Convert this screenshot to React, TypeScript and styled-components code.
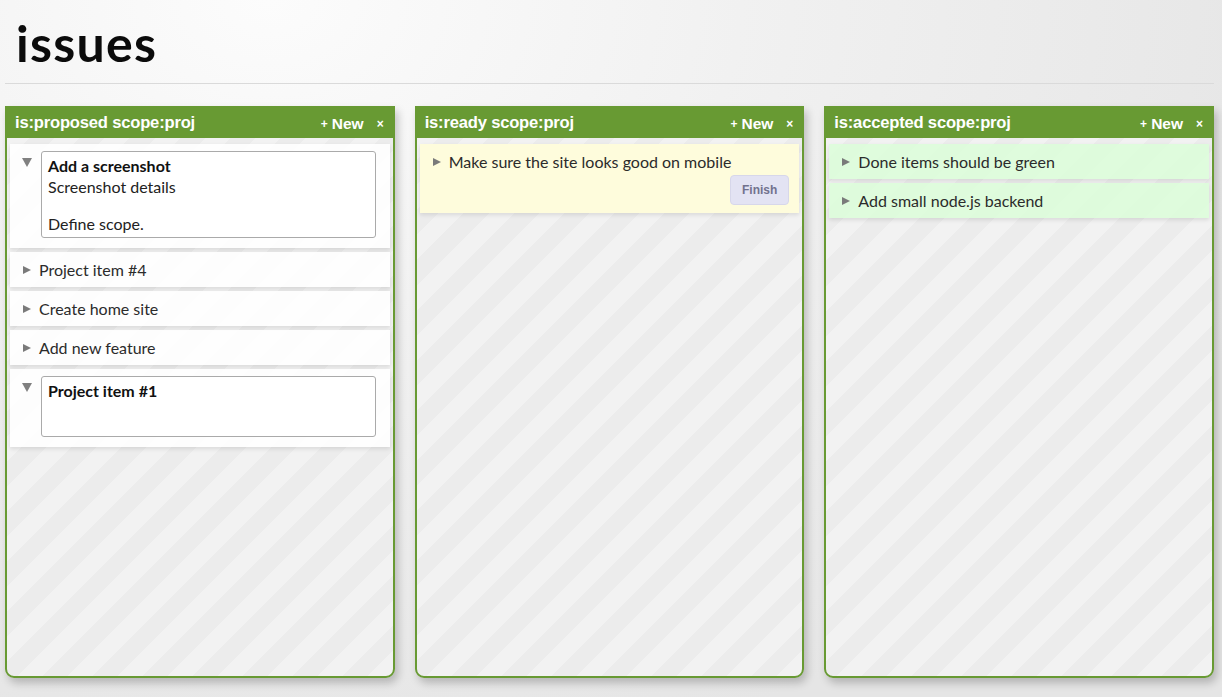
import React from "react";
import styled, { createGlobalStyle } from "styled-components";

const GlobalStyle = createGlobalStyle`
  html, body {
    margin: 0;
    padding: 0;
    height: 100%;
  }
  body {
    font-family: Lato, "Open Sans", sans-serif;
    background: radial-gradient(ellipse at 22% 0%, #fcfcfc 0%, #f1f1f1 35%, #e5e5e5 80%);
    overflow: hidden;
  }
  #root {
    height: 100%;
  }
`;

const Page = styled.div`
  height: 100vh;
  display: flex;
  flex-direction: column;
  box-sizing: border-box;
  padding: 0 8px 19px 5px;
`;

const Header = styled.header`
  height: 84px;
  box-sizing: border-box;
  border-bottom: 1px solid #dadada;
  display: flex;
  align-items: flex-end;
  padding: 0 0 15px 11px;
  margin-bottom: 22px;
`;

const Title = styled.h1`
  margin: 0;
  font-family: Lato, sans-serif;
  font-weight: 700;
  font-size: 50px;
  line-height: 1;
  color: #0b0b0b;
  letter-spacing: 1.3px;
`;

const Board = styled.div`
  flex: 1;
  display: flex;
  gap: 20px;
  min-height: 0;
`;

const Column = styled.section`
  flex: 1;
  display: flex;
  flex-direction: column;
  border: 2px solid #689a33;
  border-radius: 0 0 9px 9px;
  background: repeating-linear-gradient(
    -45deg,
    #f2f2f2 0px,
    #f2f2f2 17.7px,
    #ececec 17.7px,
    #ececec 35.4px
  );
  box-shadow: 3px 5px 9px rgba(0, 0, 0, 0.22);
  overflow: hidden;
`;

const ColumnHead = styled.div`
  height: 30px;
  background: #689a33;
  display: flex;
  align-items: center;
  padding: 0 9px 0 8px;
  color: #fff;
  font-family: "Liberation Sans", Arial, sans-serif;
  font-weight: 700;
`;

const ColumnTitle = styled.span`
  flex: 1;
  font-size: 16.6px;
  letter-spacing: -0.2px;
`;

const NewButton = styled.span`
  font-size: 15.5px;
  display: flex;
  align-items: center;
  gap: 4px;
  margin-right: 13px;
  margin-top: 2px;
`;

const Plus = styled.span`
  font-size: 12px;
`;

const Close = styled.span`
  font-size: 12px;
  margin-top: 1px;
`;

const Cards = styled.div`
  display: flex;
  flex-direction: column;
  gap: 4px;
  padding: 6px 3px;
`;

const Card = styled.div<{ $tone?: "white" | "yellow" | "green" }>`
  background: ${(p) =>
    p.$tone === "yellow"
      ? "rgba(255, 253, 218, 0.92)"
      : p.$tone === "green"
      ? "rgba(221, 252, 219, 0.95)"
      : "rgba(255, 255, 255, 0.88)"};
  box-shadow: 0 2px 4px rgba(0, 0, 0, 0.1);
  padding: 8px 14px 8px 12px;
  font-size: 16px;
  color: #2b2b2b;
`;

const Row = styled.div`
  display: flex;
  align-items: flex-start;
  gap: 6px;
`;

const Arrow = styled.span`
  flex: none;
  width: 0;
  height: 0;
  margin: 6px 2px 0 1px;
  border-top: 4.5px solid transparent;
  border-bottom: 4.5px solid transparent;
  border-left: 8px solid #7a7a7a;
`;

const ArrowDown = styled.span`
  flex: none;
  width: 0;
  height: 0;
  margin: 6px 2px 0 0;
  border-left: 5px solid transparent;
  border-right: 5px solid transparent;
  border-top: 9px solid #808080;
`;

const Label = styled.span`
  line-height: 19px;
`;

const Editor = styled.div<{ $h: number }>`
  flex: 1;
  height: ${(p) => p.$h}px;
  box-sizing: border-box;
  background: #fff;
  border: 1px solid #aaa;
  border-radius: 3px;
  padding: 4px 6px;
  margin: -1px 0 2px 1px;
`;

const EditorTitle = styled.div`
  font-weight: 700;
  color: #111;
  line-height: 20px;
`;

const EditorText = styled.div`
  line-height: 18.5px;
  margin-top: 2px;
  white-space: pre-line;
  color: #222;
`;

const Actions = styled.div`
  display: flex;
  justify-content: flex-end;
  margin-top: 4px;
  margin-right: -4px;
`;

const FinishButton = styled.button`
  font-family: "Liberation Sans", Arial, sans-serif;
  font-size: 12px;
  font-weight: 700;
  color: #72728e;
  background: #e3e3f3;
  border: 1px solid #d7d7ea;
  border-radius: 4px;
  padding: 0 11px;
  height: 30px;
`;

type Item =
  | { kind: "row"; text: string }
  | { kind: "open"; title: string; body: string; h: number }
  | { kind: "finish"; text: string };

const columns: { title: string; tone: "white" | "yellow" | "green"; items: Item[] }[] = [
  {
    title: "is:proposed scope:proj",
    tone: "white",
    items: [
      { kind: "open", title: "Add a screenshot", body: "Screenshot details\n\nDefine scope.", h: 87 },
      { kind: "row", text: "Project item #4" },
      { kind: "row", text: "Create home site" },
      { kind: "row", text: "Add new feature" },
      { kind: "open", title: "Project item #1", body: "", h: 61 },
    ],
  },
  {
    title: "is:ready scope:proj",
    tone: "yellow",
    items: [{ kind: "finish", text: "Make sure the site looks good on mobile" }],
  },
  {
    title: "is:accepted scope:proj",
    tone: "green",
    items: [
      { kind: "row", text: "Done items should be green" },
      { kind: "row", text: "Add small node.js backend" },
    ],
  },
];

function renderItem(item: Item) {
  if (item.kind === "open") {
    return (
      <Row>
        <ArrowDown />
        <Editor $h={item.h}>
          <EditorTitle>{item.title}</EditorTitle>
          {item.body && <EditorText>{item.body}</EditorText>}
        </Editor>
      </Row>
    );
  }
  return (
    <>
      <Row>
        <Arrow />
        <Label>{item.text}</Label>
      </Row>
      {item.kind === "finish" && (
        <Actions>
          <FinishButton>Finish</FinishButton>
        </Actions>
      )}
    </>
  );
}

export default function App() {
  return (
    <>
      <GlobalStyle />
      <Page>
        <Header>
          <Title>issues</Title>
        </Header>
        <Board>
          {columns.map((col) => (
            <Column key={col.title}>
              <ColumnHead>
                <ColumnTitle>{col.title}</ColumnTitle>
                <NewButton>
                  <Plus>+</Plus>New
                </NewButton>
                <Close>×</Close>
              </ColumnHead>
              <Cards>
                {col.items.map((item, i) => (
                  <Card key={i} $tone={col.tone}>
                    {renderItem(item)}
                  </Card>
                ))}
              </Cards>
            </Column>
          ))}
        </Board>
      </Page>
    </>
  );
}
